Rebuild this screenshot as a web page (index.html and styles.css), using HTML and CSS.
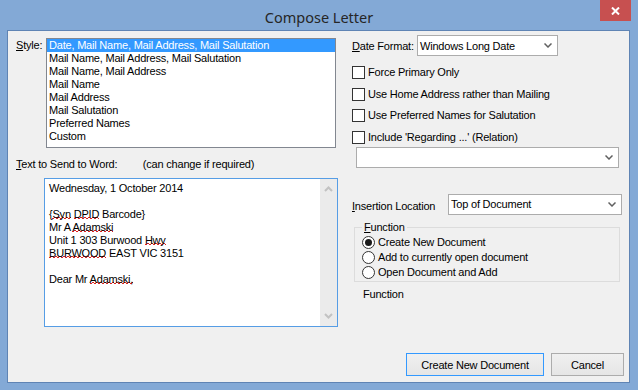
FILE: index.html
```html
<!DOCTYPE html>
<html lang="en">
<head>
<meta charset="UTF-8" />
<title>Compose Letter</title>
<link rel="stylesheet" href="styles.css">
</head>
<body>
<div class="window">
  <div class="titlebar">
    <span class="title">Compose Letter</span>
    <button class="close" aria-label="Close">
      <svg width="9" height="8" viewBox="0 0 9 8"><path d="M1 0.5 L8 7.5 M8 0.5 L1 7.5" stroke="#fff" stroke-width="2"/></svg>
    </button>
  </div>
  <div class="client">
    <div class="col-left">
      <div class="style-row">
        <span class="style-label"><u>S</u>tyle:</span>
        <div class="listbox">
          <div class="item sel">Date, Mail Name, Mail Address, Mail Salutation</div>
          <div class="item">Mail Name, Mail Address, Mail Salutation</div>
          <div class="item">Mail Name, Mail Address</div>
          <div class="item">Mail Name</div>
          <div class="item">Mail Address</div>
          <div class="item">Mail Salutation</div>
          <div class="item">Preferred Names</div>
          <div class="item">Custom</div>
        </div>
      </div>
      <div class="send-label">
        <span class="send-title"><u>T</u>ext to Send to Word:</span>
        <span>(can change if required)</span>
      </div>
      <div class="letter">
        <div class="letter-text">
          <div>Wednesday, 1 October 2014</div>
          <div>&nbsp;</div>
          <div>{<span class="sp">Syn</span> <span class="sp">DPID</span> Barcode}</div>
          <div>Mr A <span class="sp">Adamski</span></div>
          <div>Unit 1 303 Burwood <span class="sp">Hwy</span></div>
          <div><span class="sp">BURWOOD</span> EAST VIC 3151</div>
          <div>&nbsp;</div>
          <div>Dear Mr <span class="sp">Adamski,</span></div>
        </div>
        <div class="vscroll">
          <svg width="9" height="6" viewBox="0 0 9 6"><path d="M1 5 L4.5 1.5 L8 5" fill="none" stroke="#c2c2c2" stroke-width="2"/></svg>
          <svg width="9" height="6" viewBox="0 0 9 6"><path d="M1 1 L4.5 4.5 L8 1" fill="none" stroke="#c2c2c2" stroke-width="2"/></svg>
        </div>
      </div>
    </div>

    <div class="col-right">
      <div class="date-row">
        <span class="date-label"><u>D</u>ate Format:</span>
        <div class="select date-select">
          <span>Windows Long Date</span>
          <svg class="chev" width="8" height="5" viewBox="0 0 8 5"><path d="M0.5 0.5 L4 4 L7.5 0.5" fill="none" stroke="#606060" stroke-width="1.5"/></svg>
        </div>
      </div>
      <div class="checks">
        <label class="check"><span class="box"></span>Force Primary Only</label>
        <label class="check"><span class="box"></span>Use Home Address rather than Mailing</label>
        <label class="check"><span class="box"></span>Use Preferred Names for Salutation</label>
        <label class="check"><span class="box"></span>Include 'Regarding ...' (Relation)</label>
      </div>
      <div class="select combo">
        <span></span>
        <svg class="chev" width="8" height="5" viewBox="0 0 8 5"><path d="M0.5 0.5 L4 4 L7.5 0.5" fill="none" stroke="#606060" stroke-width="1.5"/></svg>
      </div>
      <div class="insert-row">
        <span class="insert-label"><u>I</u>nsertion Location</span>
        <div class="select insert-select">
          <span>Top of Document</span>
          <svg class="chev" width="8" height="5" viewBox="0 0 8 5"><path d="M0.5 0.5 L4 4 L7.5 0.5" fill="none" stroke="#606060" stroke-width="1.5"/></svg>
        </div>
      </div>
      <fieldset class="function">
        <legend><u>F</u>unction</legend>
        <label class="radio-row"><span class="radio on"><span class="dot"></span></span>Create New Document</label>
        <label class="radio-row"><span class="radio"></span>Add to currently open document</label>
        <label class="radio-row"><span class="radio"></span>Open Document and Add</label>
      </fieldset>
      <div class="function-note">Function</div>
      <div class="buttons">
        <button class="btn primary">Create New Document</button>
        <button class="btn cancel">Cancel</button>
      </div>
    </div>
  </div>
</div>
</body>
</html>
```

FILE: styles.css
```css
* {
  box-sizing: border-box;
}
html, body {
  margin: 0;
  padding: 0;
}
body {
  width: 638px;
  height: 390px;
  overflow: hidden;
  font-family: "Liberation Sans", Arial, sans-serif;
  font-size: 11px;
  letter-spacing: -0.2px;
  color: #000;
}
u {
  text-decoration: underline;
  text-underline-offset: 1px;
}
.window {
  width: 638px;
  height: 390px;
  background: #83a9d6;
  padding: 0 8px 7px 7px;
  display: flex;
  flex-direction: column;
}
.titlebar {
  height: 30px;
  margin: 0 -8px 0 -7px;
  display: grid;
  grid-template-columns: 1fr auto 1fr;
  align-items: start;
}
.title {
  grid-column: 2;
  font-family: "Noto Sans", "Open Sans", sans-serif;
  font-size: 14.5px;
  letter-spacing: 0;
  line-height: 20px;
  padding-top: 7px;
  color: #262626;
}
.close {
  grid-column: 3;
  justify-self: end;
  width: 31px;
  height: 21px;
  margin-right: 7px;
  padding: 0;
  border: none;
  background: #c75050;
  display: flex;
  align-items: center;
  justify-content: center;
}
.client {
  flex: 1;
  background: #f0f0f0;
  border: 1px solid #5f84b4;
  display: flex;
}
/* left column */
.col-left {
  width: 344px;
  padding: 7px 0 0 8px;
}
.style-row {
  display: flex;
}
.style-label {
  width: 30px;
  line-height: 13px;
  padding-top: 1px;
}
.listbox {
  width: 290px;
  height: 110px;
  background: #fff;
  border: 1px solid #828790;
}
.item {
  line-height: 13px;
  padding-left: 2px;
  white-space: nowrap;
}
.item.sel {
  background: #3399ff;
  color: #fff;
}
.send-label {
  margin-top: 10px;
  line-height: 13px;
  white-space: nowrap;
}
.send-title {
  display: inline-block;
  width: 124px;
}
.letter {
  margin: 7px 0 0 28px;
  width: 294px;
  height: 149px;
  border: 1px solid #569de5;
  background: #fff;
  display: flex;
}
.letter-text {
  flex: 1;
  padding: 3px 4px;
  line-height: 13px;
  white-space: nowrap;
}
/* spelling squiggle: two offset rows of red dashes */
.sp {
  background-image:
    repeating-linear-gradient(90deg, #e02020 0 2px, transparent 2px 4px),
    repeating-linear-gradient(90deg, transparent 0 2px, #e02020 2px 4px);
  background-size: 100% 1px, 100% 1px;
  background-position: 0 calc(100% - 1px), 0 calc(100% - 2px);
  background-repeat: no-repeat;
}
.vscroll {
  width: 17px;
  background: #ebebeb;
  display: flex;
  flex-direction: column;
  justify-content: space-between;
  align-items: center;
  padding: 7px 0 7px;
}
/* right column */
.col-right {
  flex: 1;
  padding: 4px 5px 6px 0;
  display: flex;
  flex-direction: column;
}
.select {
  height: 21px;
  background: #fff;
  border: 1px solid #acacac;
  display: flex;
  align-items: center;
  justify-content: space-between;
  padding: 0 5px 0 2px;
  white-space: nowrap;
}
.chev {
  flex: none;
}
.date-row {
  display: flex;
  align-items: center;
}
.date-label {
  width: 65px;
}
.date-select {
  width: 141px;
}
.checks {
  margin-top: 10px;
  display: flex;
  flex-direction: column;
  gap: 8.5px;
}
.check {
  display: flex;
  align-items: center;
  line-height: 13px;
  white-space: nowrap;
}
.box {
  width: 13px;
  height: 13px;
  border: 1px solid #333;
  background: #fff;
  margin-right: 3px;
  flex: none;
}
.combo {
  margin: 3px 0 0 4px;
  width: 263px;
}
.insert-row {
  margin-top: 26px;
  display: flex;
  align-items: center;
}
.insert-label {
  width: 96px;
  padding-top: 3px;
}
.insert-select {
  width: 174px;
}
.function {
  margin: 6px 0 0 2px;
  width: 266px;
  min-width: 0;
  border: 1px solid #dcdcdc;
  padding: 1px 7px 1px;
}
.function legend {
  padding: 0 2px;
  line-height: 13px;
}
.radio-row {
  display: flex;
  align-items: center;
  height: 15px;
  white-space: nowrap;
}
.radio {
  width: 13px;
  height: 13px;
  border-radius: 50%;
  border: 1px solid #333;
  background: #fff;
  margin-right: 3px;
  flex: none;
  display: flex;
  align-items: center;
  justify-content: center;
}
.dot {
  width: 7px;
  height: 7px;
  border-radius: 50%;
  background: #1a1a1a;
}
.function-note {
  margin: 6px 0 0 11px;
  line-height: 13px;
}
.buttons {
  margin-top: auto;
  display: flex;
  justify-content: flex-end;
  gap: 7px;
}
.btn {
  height: 23px;
  padding: 0;
  font: inherit;
  letter-spacing: inherit;
  color: #000;
  border: 1px solid #acacac;
  background: linear-gradient(#f0f0f0, #e5e5e5);
}
.btn.primary {
  width: 138px;
  border-color: #3399ff;
}
.btn.cancel {
  width: 73px;
}
```
